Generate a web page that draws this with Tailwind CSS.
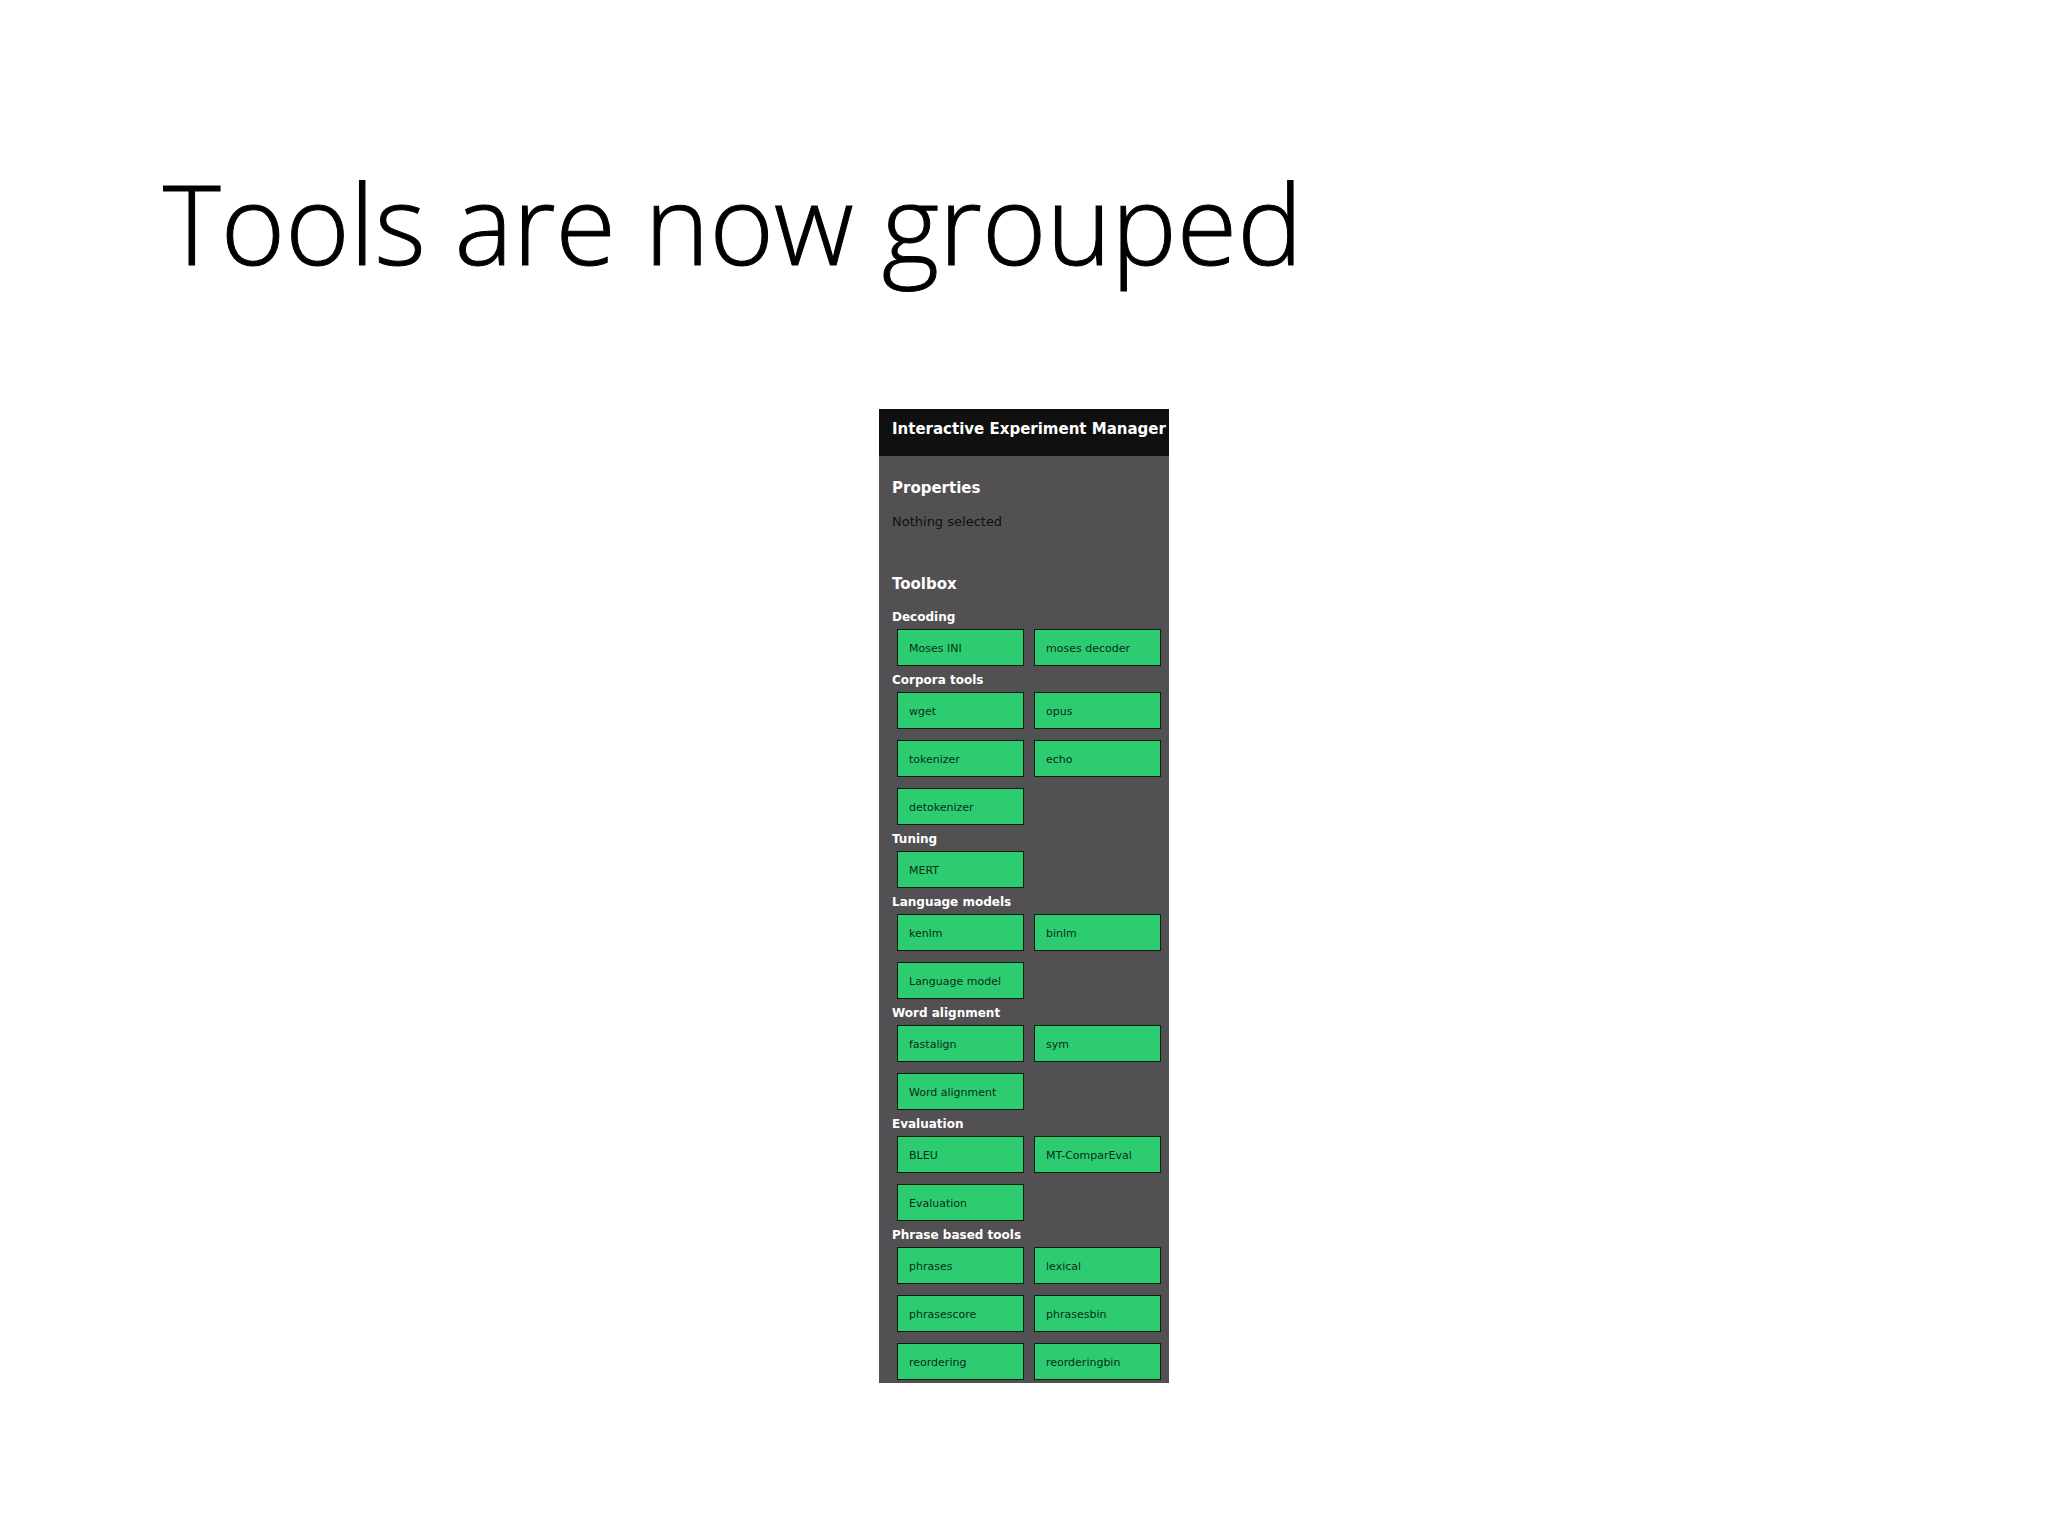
<!DOCTYPE html>
<html lang="en">
<head>
    <meta charset="UTF-8">
    <meta name="viewport" content="width=device-width, initial-scale=1.0" />
    <title>Tools are now grouped</title>
    <script src="https://cdn.jsdelivr.net/npm/@tailwindcss/browser@4"></script>
</head>
<body class="bg-white text-black">
    <main class="px-4 pt-[142px] pb-12">
        <h1 class="ml-[147px] font-['Open_Sans',sans-serif] font-light text-[110px] leading-[160px] [-webkit-text-stroke:1px_black]">Tools are now grouped</h1>

        <!-- Sidebar -->
        <div class="mx-auto mt-[107px] w-[290px] overflow-hidden bg-[#525052] pb-[3px] font-['DejaVu_Sans',Verdana,sans-serif]">
            <header class="h-[47px] bg-[#101010] pl-[13px] pt-2">
                <p class="whitespace-nowrap text-[15px] leading-6 font-bold text-white">Interactive Experiment Manager</p>
            </header>

            <!-- Properties -->
            <section class="pl-[13px] pt-5">
                <h2 class="text-[15px] leading-6 font-bold text-white">Properties</h2>
                <p class="mt-3 text-[13px] leading-5 text-[#101010]">Nothing selected</p>
            </section>

            <!-- Toolbox -->
            <section class="mt-10">
                <h2 class="mb-[7px] pl-[13px] text-[15px] leading-6 font-bold text-white">Toolbox</h2>
                <div id="toolbox"></div>
            </section>
        </div>
    </main>

    <script>
        const groups = [
            { name: 'Decoding', tools: ['Moses INI', 'moses decoder'] },
            { name: 'Corpora tools', tools: ['wget', 'opus', 'tokenizer', 'echo', 'detokenizer'] },
            { name: 'Tuning', tools: ['MERT'] },
            { name: 'Language models', tools: ['kenlm', 'binlm', 'Language model'] },
            { name: 'Word alignment', tools: ['fastalign', 'sym', 'Word alignment'] },
            { name: 'Evaluation', tools: ['BLEU', 'MT-ComparEval', 'Evaluation'] },
            { name: 'Phrase based tools', tools: ['phrases', 'lexical', 'phrasescore', 'phrasesbin', 'reordering', 'reorderingbin'] }
        ];

        // One heading and a two-column grid per group
        document.getElementById('toolbox').innerHTML = groups.map(group => `
            <h3 class="pt-[2px] pl-[13px] text-[12px] leading-6 font-bold text-white">${group.name}</h3>
            <div class="grid grid-cols-2 gap-x-[10px] gap-y-[11px] pl-[18px] pr-2">
                ${group.tools.map(tool => `<button type="button" class="h-[37px] border border-[#06200f] bg-[#2ecc71] pt-[3px] pl-[11px] text-left text-[11px] text-[#062f17] hover:bg-[#27ae60]">${tool}</button>`).join('')}
            </div>
        `).join('');
    </script>
</body>
</html>
